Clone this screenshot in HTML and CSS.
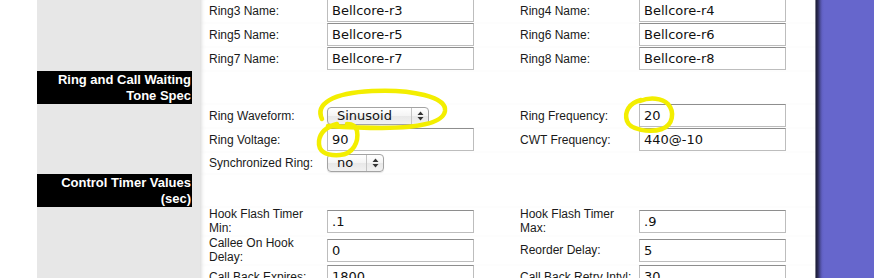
FILE: index.html
```html
<!DOCTYPE html>
<html lang="en">
<head>
  <meta charset="UTF-8" />
  <title>Regional - Ring and Call Waiting</title>
  <link rel="stylesheet" href="styles.css">
</head>
<body>

  <div class="screen">
    <div class="page">
      <div class="sheet">

        <!-- Distinctive ring names -->
        <div class="row">
          <div class="side"></div>
          <div class="fields">
            <label class="label">Ring3 Name:</label>
            <input class="text" type="text" value="Bellcore-r3">
            <label class="label right">Ring4 Name:</label>
            <input class="text" type="text" value="Bellcore-r4">
          </div>
        </div>
        <div class="row">
          <div class="side"></div>
          <div class="fields">
            <label class="label">Ring5 Name:</label>
            <input class="text" type="text" value="Bellcore-r5">
            <label class="label right">Ring6 Name:</label>
            <input class="text" type="text" value="Bellcore-r6">
          </div>
        </div>
        <div class="row">
          <div class="side"></div>
          <div class="fields">
            <label class="label">Ring7 Name:</label>
            <input class="text" type="text" value="Bellcore-r7">
            <label class="label right">Ring8 Name:</label>
            <input class="text" type="text" value="Bellcore-r8">
          </div>
        </div>

        <!-- Ring and Call Waiting Tone Spec -->
        <div class="row">
          <div class="side"><div class="title">Ring and Call Waiting<br>Tone Spec</div></div>
          <div class="fields"></div>
        </div>
        <div class="row">
          <div class="side"></div>
          <div class="fields">
            <label class="label">Ring Waveform:</label>
            <div class="cell">
              <div class="popup wide">
                <span class="value">Sinusoid</span>
                <span class="arrows">
                  <svg width="7" height="10" viewBox="0 0 7 10"><path d="M3.5 0.5 L6.5 4 L0.5 4 Z M0.5 6 L6.5 6 L3.5 9.5 Z" fill="#333"/></svg>
                </span>
              </div>
            </div>
            <label class="label right">Ring Frequency:</label>
            <input class="text" type="text" value="20">
          </div>
        </div>
        <div class="row">
          <div class="side"></div>
          <div class="fields">
            <label class="label">Ring Voltage:</label>
            <input class="text" type="text" value="90">
            <label class="label right">CWT Frequency:</label>
            <input class="text" type="text" value="440@-10">
          </div>
        </div>
        <div class="row">
          <div class="side"></div>
          <div class="fields tight">
            <label class="label">Synchronized Ring:</label>
            <div class="cell">
              <div class="popup narrow">
                <span class="value">no</span>
                <span class="arrows">
                  <svg width="7" height="10" viewBox="0 0 7 10"><path d="M3.5 0.5 L6.5 4 L0.5 4 Z M0.5 6 L6.5 6 L3.5 9.5 Z" fill="#333"/></svg>
                </span>
              </div>
            </div>
          </div>
        </div>

        <!-- Control Timer Values -->
        <div class="row">
          <div class="side"><div class="title">Control Timer Values<br>(sec)</div></div>
          <div class="fields"></div>
        </div>
        <div class="row">
          <div class="side"></div>
          <div class="fields">
            <label class="label">Hook Flash Timer Min:</label>
            <input class="text" type="text" value=".1">
            <label class="label right">Hook Flash Timer Max:</label>
            <input class="text" type="text" value=".9">
          </div>
        </div>
        <div class="row">
          <div class="side"></div>
          <div class="fields">
            <label class="label">Callee On Hook Delay:</label>
            <input class="text" type="text" value="0">
            <label class="label right">Reorder Delay:</label>
            <input class="text" type="text" value="5">
          </div>
        </div>
        <div class="row">
          <div class="side"></div>
          <div class="fields">
            <label class="label">Call Back Expires:</label>
            <input class="text" type="text" value="1800">
            <label class="label right">Call Back Retry Intvl:</label>
            <input class="text" type="text" value="30">
          </div>
        </div>

      </div>
    </div>
    <div class="rail"></div>

    <!-- highlighter marks drawn over the form -->
    <svg class="marks" width="874" height="278" viewBox="0 0 874 278">
      <path d="M322 119 C315 104 332 93 372 91 C412 89 447 97 445 111 C443 123 418 128 382 128 C362 128 344 127 328 126"/>
      <path d="M337 124 C326 127 320 132 319 141 C318 151 325 156 340 155 C353 154 359 142 357 131 C356 126 352 124 347 124"/>
      <path d="M641 100 C629 103 624 112 627 121 C630 130 650 133 662 129 C673 125 675 112 668 104 C662 98 650 97 640 101"/>
    </svg>
  </div>

</body>
</html>
```

FILE: styles.css
```css
* {
  box-sizing: border-box;
  margin: 0;
  padding: 0;
}

body {
  width: 874px;
  height: 278px;
  overflow: hidden;
  background: #fff;
  font-family: 'Liberation Sans', Arial, sans-serif;
  font-size: 12px;
  color: #1a1a1a;
}

.screen {
  position: relative;
  display: flex;
  height: 278px;
  overflow: hidden;
}

.page {
  width: 815px;
  padding-left: 37px;
  background: #fff;
}

.rail {
  flex: 1;
  background: linear-gradient(to right, #dcdcdc 0, #1c1c38 1px, #2c2c58 3px, #4a4a96 5px, #6060c2 7px, #6666cc 9px);
}

.sheet {
  margin-top: -1px;
}

.row {
  display: flex;
}

.side {
  width: 163px;
  flex: none;
  padding-right: 8px;
  background: #e7e7e7;
}

.title {
  background: #000;
  color: #fff;
  font-weight: bold;
  font-size: 13px;
  line-height: 16px;
  text-align: right;
  padding: 1px 1px 0 0;
  height: 33px;
}

.fields {
  flex: 1;
  display: grid;
  grid-template-columns: 118px 147px 165px 147px;
  align-items: center;
  padding: 0 0 1px 9px;
  box-shadow: inset 4px 0 4px -3px rgba(0, 0, 0, 0.18);
}

.fields.tight {
  min-height: 22px;
}

.label {
  line-height: 14px;
}

.label.right {
  padding-left: 46px;
}

.text {
  display: block;
  width: 147px;
  height: 23px;
  padding: 0 4px;
  border: 1px solid #bdbdbd;
  border-top-color: #8e8e8e;
  background: #fff;
  font-family: 'DejaVu Sans', sans-serif;
  font-size: 13px;
  color: #111;
  outline: none;
}

.cell {
  display: flex;
  align-items: center;
}

.popup {
  display: flex;
  align-items: center;
  height: 18px;
  border: 1px solid #a3a3a3;
  border-radius: 4px;
  background: linear-gradient(#ffffff, #f4f4f4 50%, #e8e8e8 51%, #f1f1f1);
  box-shadow: 0 1px 1px rgba(0, 0, 0, 0.1);
  font-family: 'DejaVu Sans', sans-serif;
  font-size: 13px;
  color: #111;
}

.popup.wide {
  width: 102px;
}

.popup.narrow {
  width: 57px;
}

.popup .value {
  flex: 1;
  padding-left: 9px;
  line-height: 16px;
}

.popup .arrows {
  width: 17px;
  height: 100%;
  display: flex;
  align-items: center;
  justify-content: center;
  border-left: 1px solid #c4c4c4;
}

.marks {
  position: absolute;
  left: 0;
  top: 0;
  pointer-events: none;
}

.marks path {
  fill: none;
  stroke: #f3ee00;
  stroke-width: 4.5;
  stroke-linecap: round;
  stroke-linejoin: round;
}
```
